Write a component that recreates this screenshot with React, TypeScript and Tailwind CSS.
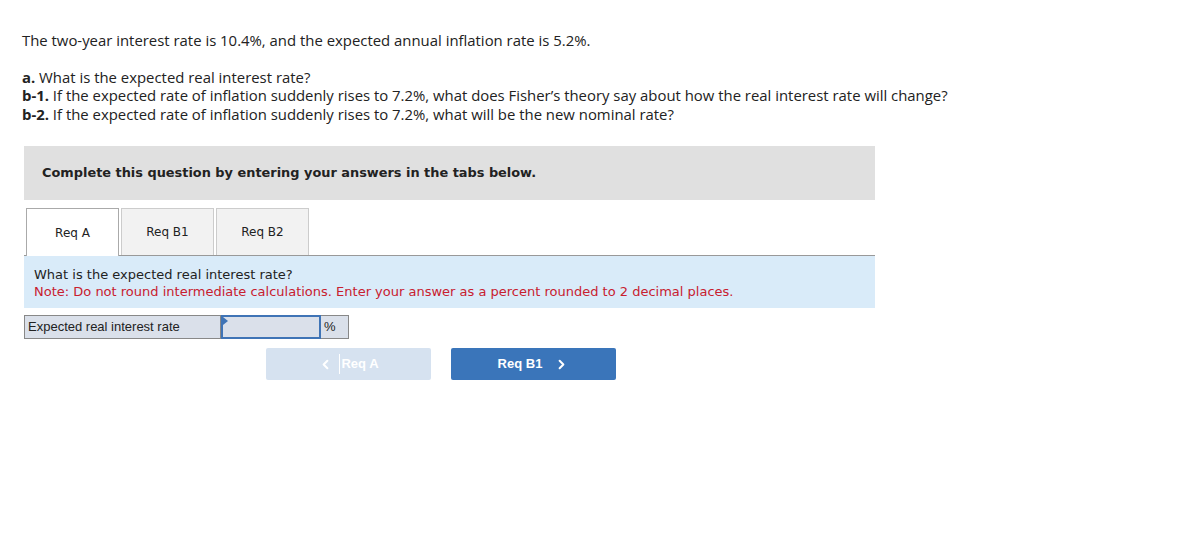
import { ChevronLeft, ChevronRight } from 'lucide-react';

const tabs = ['Req A', 'Req B1', 'Req B2'];

export default function App() {
  return (
    <div className="min-h-[550px] bg-white px-[22px] pt-[31px] text-[#222]">
      <div className="font-['Open_Sans',sans-serif] text-[14.9px] leading-[18.5px]">
        <p>The two-year interest rate is 10.4%, and the expected annual inflation rate is 5.2%.</p>
        <div className="mt-[18px]">
          <p><b>a.</b> What is the expected real interest rate?</p>
          <p><b>b-1.</b> If the expected rate of inflation suddenly rises to 7.2%, what does Fisher’s theory say about how the real interest rate will change?</p>
          <p><b>b-2.</b> If the expected rate of inflation suddenly rises to 7.2%, what will be the new nominal rate?</p>
        </div>
      </div>

      <div className="mt-[23px] ml-[2px] w-[851px] font-['DejaVu_Sans',sans-serif]">
        <div className="flex h-[54px] items-center bg-[#e0e0e0] px-[18px] text-[12.9px] font-bold text-[#222]">
          Complete this question by entering your answers in the tabs below.
        </div>

        <div className="mt-[8px] flex gap-[2px] border-b border-[#999] pl-[2px]">
          {tabs.map((t, i) => (
            <div
              key={t}
              className={
                i === 0
                  ? 'relative -mb-px flex h-[48px] w-[93px] items-center justify-center border border-b-0 border-[#aaa] bg-white text-[12px] text-[#222]'
                  : 'flex h-[47px] w-[93px] items-center justify-center border border-b-0 border-[#ccc] bg-[#f2f2f2] text-[12px] text-[#222]'
              }
            >
              {t}
            </div>
          ))}
        </div>

        <div className="bg-[#d9ebf9] px-[10px] pt-[10px] pb-[8px] text-[13px] leading-[17px]">
          <p className="text-[#222]">What is the expected real interest rate?</p>
          <p className="text-[#c8202f]">Note: Do not round intermediate calculations. Enter your answer as a percent rounded to 2 decimal places.</p>
        </div>

        <div className="mt-[7px] flex h-[24px] font-['Liberation_Sans',sans-serif] text-[13px] text-[#222]">
          <div className="flex w-[197px] items-center border border-[#888] bg-[#dae0ea] px-[3px]">
            Expected real interest rate
          </div>
          <div className="relative w-[100px] border-2 border-[#3f74b6] bg-[#dae0ea]">
            <span className="absolute left-0 top-0 h-0 w-0 border-t-[4px] border-r-[4px] border-b-[4px] border-t-transparent border-b-transparent border-r-transparent border-l-[5px] border-l-[#3f74b6]" />
          </div>
          <div className="flex w-[28px] items-center border border-l-0 border-[#888] bg-[#dae0ea] px-[3px]">%</div>
        </div>

        <div className="mt-[9px] flex gap-[20px] pl-[242px] font-['Liberation_Sans',sans-serif] text-[13px] font-bold text-white">
          <div className="flex h-[32px] w-[165px] items-center justify-center gap-[6px] rounded-[2px] bg-[#d6e2f0]">
            <ChevronLeft size={15} strokeWidth={3.2} />
            <span className="border-l border-white pl-[1px]">Req A</span>
          </div>
          <div className="flex h-[32px] w-[165px] items-center justify-center gap-[12px] rounded-[2px] bg-[#3a75ba]">
            <span>Req B1</span>
            <ChevronRight size={15} strokeWidth={3.2} />
          </div>
        </div>
      </div>
    </div>
  );
}
